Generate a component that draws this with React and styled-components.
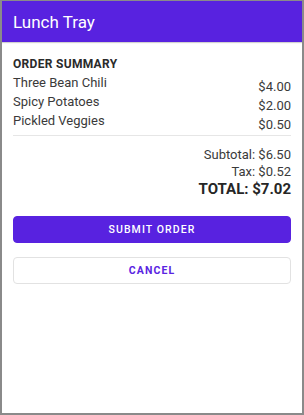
import React from 'react'
import styled, { createGlobalStyle } from 'styled-components'

const GlobalStyle = createGlobalStyle`
  html, body {
    margin: 0;
    padding: 0;
    background: #ffffff;
  }
  * {
    box-sizing: border-box;
  }
`

const Frame = styled.div`
  width: 304px;
  height: 415px;
  border: 2px solid #8a8a8a;
  border-top-width: 1px;
  background: #ffffff;
  font-family: Roboto, "Liberation Sans", sans-serif;
  color: #333333;
  display: flex;
  flex-direction: column;
  overflow: hidden;
`

const TopBar = styled.header`
  height: 41px;
  background: #5822e0;
  color: #ffffff;
  display: flex;
  align-items: center;
  padding-left: 11px;
  font-size: 17px;
  font-weight: 400;
  box-shadow: 0 1px 1px rgba(0, 0, 0, 0.18);
`

const Content = styled.main`
  padding: 14px 11px 0 11px;
  display: flex;
  flex-direction: column;
`

const Heading = styled.h2`
  margin: 0 0 3px 0;
  font-size: 12px;
  font-weight: 700;
  letter-spacing: 0.3px;
  line-height: 16px;
  color: #2a2a2a;
`

const ItemRow = styled.div`
  display: flex;
  justify-content: space-between;
  align-items: flex-start;
  height: 19px;
  font-size: 13px;
  line-height: 16px;
  color: #3a3a3a;
`

const Price = styled.span`
  padding-top: 4px;
`

const Divider = styled.hr`
  border: none;
  border-top: 1px solid #e6e6e6;
  margin: 3px 0 0 0;
  width: 100%;
`

const Totals = styled.div`
  display: flex;
  flex-direction: column;
  align-items: flex-end;
  padding-top: 10px;
`

const TotalLine = styled.div`
  font-size: ${p => (p.$big ? '15px' : '13px')};
  font-weight: ${p => (p.$big ? 700 : 400)};
  line-height: ${p => (p.$big ? '19px' : '17px')};
  color: ${p => (p.$big ? '#262626' : '#3a3a3a')};
`

const Button = styled.button`
  width: 100%;
  height: 27px;
  border-radius: 4px;
  font-family: Roboto, "Liberation Sans", sans-serif;
  font-size: 10.5px;
  letter-spacing: 1.1px;
  cursor: pointer;
  background: ${p => (p.$outlined ? '#ffffff' : '#5822e0')};
  color: ${p => (p.$outlined ? '#5a24e2' : '#ffffff')};
  border: 1px solid ${p => (p.$outlined ? '#e2e2e2' : '#5822e0')};
  margin-top: ${p => (p.$outlined ? '14px' : '17px')};
  font-weight: ${p => (p.$outlined ? 700 : 500)};
`

const items = [
  { name: 'Three Bean Chili', price: '$4.00' },
  { name: 'Spicy Potatoes', price: '$2.00' },
  { name: 'Pickled Veggies', price: '$0.50' },
]

const App = () => {
  return (
    <>
      <GlobalStyle />
      <Frame>
        <TopBar>Lunch Tray</TopBar>
        <Content>
          <Heading>ORDER SUMMARY</Heading>
          {items.map(item => (
            <ItemRow key={item.name}>
              <span>{item.name}</span>
              <Price>{item.price}</Price>
            </ItemRow>
          ))}
          <Divider />
          <Totals>
            <TotalLine>Subtotal: $6.50</TotalLine>
            <TotalLine>Tax: $0.52</TotalLine>
            <TotalLine $big>TOTAL: $7.02</TotalLine>
          </Totals>
          <Button>SUBMIT ORDER</Button>
          <Button $outlined>CANCEL</Button>
        </Content>
      </Frame>
    </>
  )
}

export default App
